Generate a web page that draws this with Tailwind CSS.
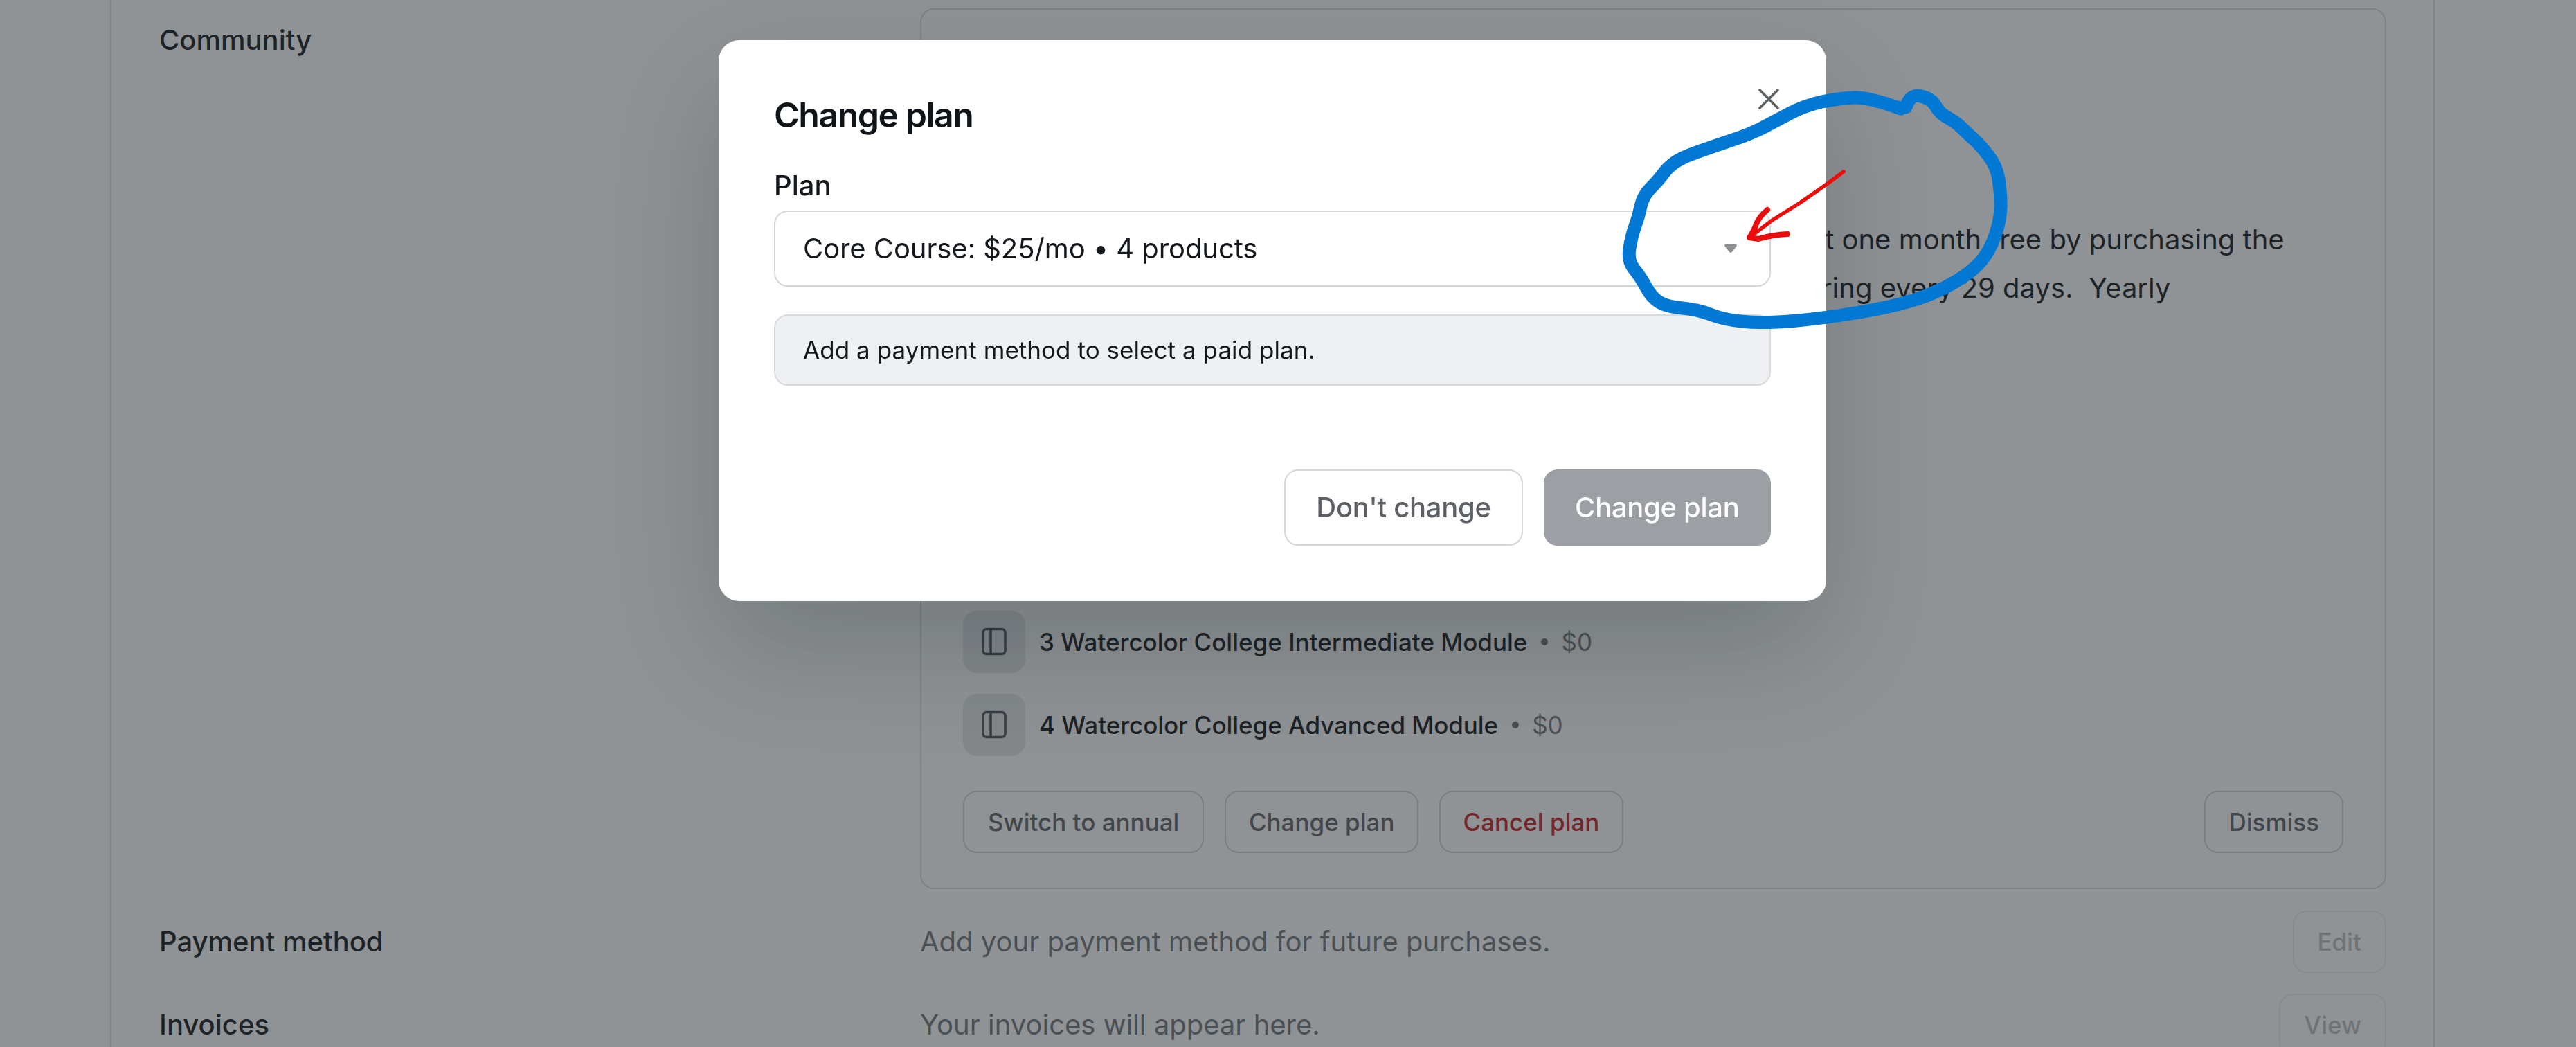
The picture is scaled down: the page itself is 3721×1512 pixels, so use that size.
<!DOCTYPE html>
<html lang="en">
<head>
<meta charset="utf-8">
<title>Change plan</title>
<script src="https://cdn.jsdelivr.net/npm/@tailwindcss/browser@4"></script>
</head>
<body class="relative h-[1512px] w-[3721px] overflow-hidden bg-white font-['Inter',sans-serif] text-[#1a1e24]">

<!-- Page behind the dialog -->
<main class="ml-[159px] h-[1700px] w-[3358px] border-x-[2px] border-[#dcdfe2] pl-[69px] pr-[69px] pt-[12px]">
  <section class="grid grid-cols-[1099px_2118px]">
    <h3 class="pt-[16px] text-[40px] font-medium leading-[60px]">Community</h3>
    <div class="flex h-[1272px] flex-col rounded-[20px] border-[2.5px] border-[#dcdfe2] px-[60px] pb-[50px] pt-[297px]">
      <p class="ml-[1192px] whitespace-pre text-[40px] leading-[70px]">Get one month free by purchasing the</p>
      <p class="ml-[1140px] whitespace-pre text-[40px] leading-[70px]">recurring every 29 days.  Yearly</p>
      <ul class="mt-[431px] flex flex-col gap-[30px]">
        <li class="flex items-center gap-[20px]">
          <span class="flex h-[90px] w-[90px] items-center justify-center rounded-[20px] bg-[#e6e8ea]">
            <svg class="h-[50px] w-[50px]" viewBox="0 0 50 50" fill="none" stroke="#50565c" stroke-width="3.6" stroke-linejoin="round"><rect x="9" y="6.5" width="32" height="36" rx="5"/><path d="M20 6.5v36"/></svg>
          </span>
          <span class="text-[35px] font-medium">3 Watercolor College Intermediate Module</span>
          <span class="h-[10px] w-[10px] rounded-full bg-[#74797e]"></span>
          <span class="ml-[-1px] text-[35px] text-[#74797e]">$0</span>
        </li>
        <li class="flex items-center gap-[20px]">
          <span class="flex h-[90px] w-[90px] items-center justify-center rounded-[20px] bg-[#e6e8ea]">
            <svg class="h-[50px] w-[50px]" viewBox="0 0 50 50" fill="none" stroke="#50565c" stroke-width="3.6" stroke-linejoin="round"><rect x="9" y="6.5" width="32" height="36" rx="5"/><path d="M20 6.5v36"/></svg>
          </span>
          <span class="text-[35px] font-medium tracking-[-0.06px]">4 Watercolor College Advanced Module</span>
          <span class="h-[10px] w-[10px] rounded-full bg-[#74797e]"></span>
          <span class="ml-[-1px] text-[35px] text-[#74797e]">$0</span>
        </li>
      </ul>
      <div class="mt-[50px] flex gap-[30px]">
        <button class="h-[90px] rounded-[20px] border-[2.5px] border-[#d5d7da] px-[34px] text-[35px] font-medium text-[#62676c]">Switch to annual</button>
        <button class="h-[90px] rounded-[20px] border-[2.5px] border-[#d5d7da] px-[32.5px] text-[35px] font-medium text-[#62676c]">Change plan</button>
        <button class="h-[90px] rounded-[20px] border-[2.5px] border-[#d5d7da] px-[32.5px] text-[35px] font-medium text-[#c42628]">Cancel plan</button>
        <button class="ml-auto h-[90px] rounded-[20px] border-[2.5px] border-[#d5d7da] px-[33px] text-[35px] font-medium text-[#62676c]">Dismiss</button>
      </div>
    </div>
  </section>
  <section class="mt-[31px] grid grid-cols-[1099px_2118px] items-center">
    <h3 class="text-[40px] font-medium leading-[60px]">Payment method</h3>
    <div class="flex items-center justify-between">
      <p class="text-[40px] text-[#74797e]">Add your payment method for future purchases.</p>
      <button class="h-[90px] rounded-[20px] border-[2.5px] border-[#eceef0] px-[34px] text-[35px] font-medium text-[#bcbfc3]">Edit</button>
    </div>
  </section>
  <section class="mt-[30px] grid grid-cols-[1099px_2118px] items-center">
    <h3 class="text-[40px] font-medium leading-[60px]">Invoices</h3>
    <div class="flex items-center justify-between">
      <p class="text-[40px] text-[#74797e]">Your invoices will appear here.</p>
      <button class="h-[90px] rounded-[20px] border-[2.5px] border-[#eceef0] px-[34px] text-[35px] font-medium text-[#bcbfc3]">View</button>
    </div>
  </section>
</main>

<!-- Scrim -->
<div class="fixed inset-0 bg-[rgba(33,39,44,0.5)]"></div>

<!-- Dialog -->
<div class="fixed left-[1038px] top-[58px] flex h-[810px] w-[1600px] flex-col rounded-[30px] bg-white px-[80px] pb-[80px] pt-[70px] shadow-[0_70px_170px_rgba(20,30,35,0.22)]">
  <div class="flex items-start justify-between">
    <h2 class="text-[50px] font-semibold leading-[76px] tracking-[-1.5px] text-[#10151a]">Change plan</h2>
    <button class="-mr-[12px] h-[30px] w-[30px]" aria-label="Close">
      <svg class="h-[30px] w-[30px]" viewBox="0 0 30 30" fill="none" stroke="#5d6166" stroke-width="3.6" stroke-linecap="round"><path d="M2 2l26 26M28 2L2 28"/></svg>
    </button>
  </div>
  <label class="mt-[34px] text-[40px] font-medium leading-[60px] text-[#14181d]">Plan</label>
  <div class="mt-[6px] flex h-[110px] items-center justify-between rounded-[20px] border-[2.5px] border-[#d5d7da] pl-[40px] pr-[47px] text-[40px] tracking-[-0.08px] text-[#14181d]">
    <span>Core Course: $25/mo • 4 products</span>
    <svg class="h-[12px] w-[18px]" viewBox="0 0 18 12" fill="#8a8f94"><path d="M2 0h14c1.6 0 2.4 1.6 1.4 2.8l-6.6 8.2c-.9 1.2-2.7 1.2-3.6 0L.6 2.8C-.4 1.6.4 0 2 0z"/></svg>
  </div>
  <div class="mt-[40px] flex h-[103px] items-center rounded-[20px] border-[2.5px] border-[#d8dadd] bg-[#eef0f2] px-[40px] text-[35px] tracking-[0.05px] text-[#14181d]">
    Add a payment method to select a paid plan.
  </div>
  <div class="mt-auto flex justify-end gap-[30px]">
    <button class="h-[110px] rounded-[20px] border-[2.5px] border-[#d5d7da] px-[44px] text-[40px] font-medium tracking-[-0.3px] text-[#5d6166]">Don't change</button>
    <button class="h-[110px] rounded-[20px] bg-[#9c9fa3] px-[45.5px] text-[40px] font-medium tracking-[-0.3px] text-white">Change plan</button>
  </div>
</div>

<!-- Hand-drawn annotations -->
<svg class="pointer-events-none fixed left-0 top-0 h-[1512px] w-[3721px]" viewBox="0 0 3721 1512" fill="none" stroke-linecap="round" stroke-linejoin="round">
  <path stroke="#0078d4" stroke-width="19" d="M2746 157Q2699 140 2678 141Q2657 142 2631.5 147Q2606 153 2587 163Q2568 173 2549 183Q2530 193 2504.5 201.5Q2479 210 2453.5 219Q2428 228 2418 235.5Q2408 243 2402 251.5Q2396 260 2384.5 271.5Q2373 283 2370 298Q2367 313 2362 326.5Q2357 340 2354 358.5Q2351 377 2360.5 388.5Q2370 400 2378 415Q2386 430 2397 436.5Q2408 443 2430.5 445Q2453 447 2472 454.5Q2491 462 2520 464.5Q2549 467 2590.5 463.5Q2632 460 2683 451.5Q2734 443 2765.5 433Q2797 423 2822.5 408Q2848 393 2861 378Q2874 363 2882 340Q2890 317 2890 297Q2890 277 2887 258.5Q2884 240 2872.5 225Q2861 210 2851.5 201.5Q2842 193 2834 185Q2826 177 2813.5 170Q2801 163 2796 153Q2791 143 2775 139Q2759 135 2753 155"/>
  <path stroke="#ec0c0c" stroke-width="5.5" d="M2663 248L2640 265L2600 293L2560 318L2527 343"/>
  <path stroke="#ec0c0c" stroke-width="8" d="M2553 303Q2542 312 2537 323Q2534 333 2527 343L2540 345Q2560 339 2582 338"/>
</svg>
</body>
</html>
